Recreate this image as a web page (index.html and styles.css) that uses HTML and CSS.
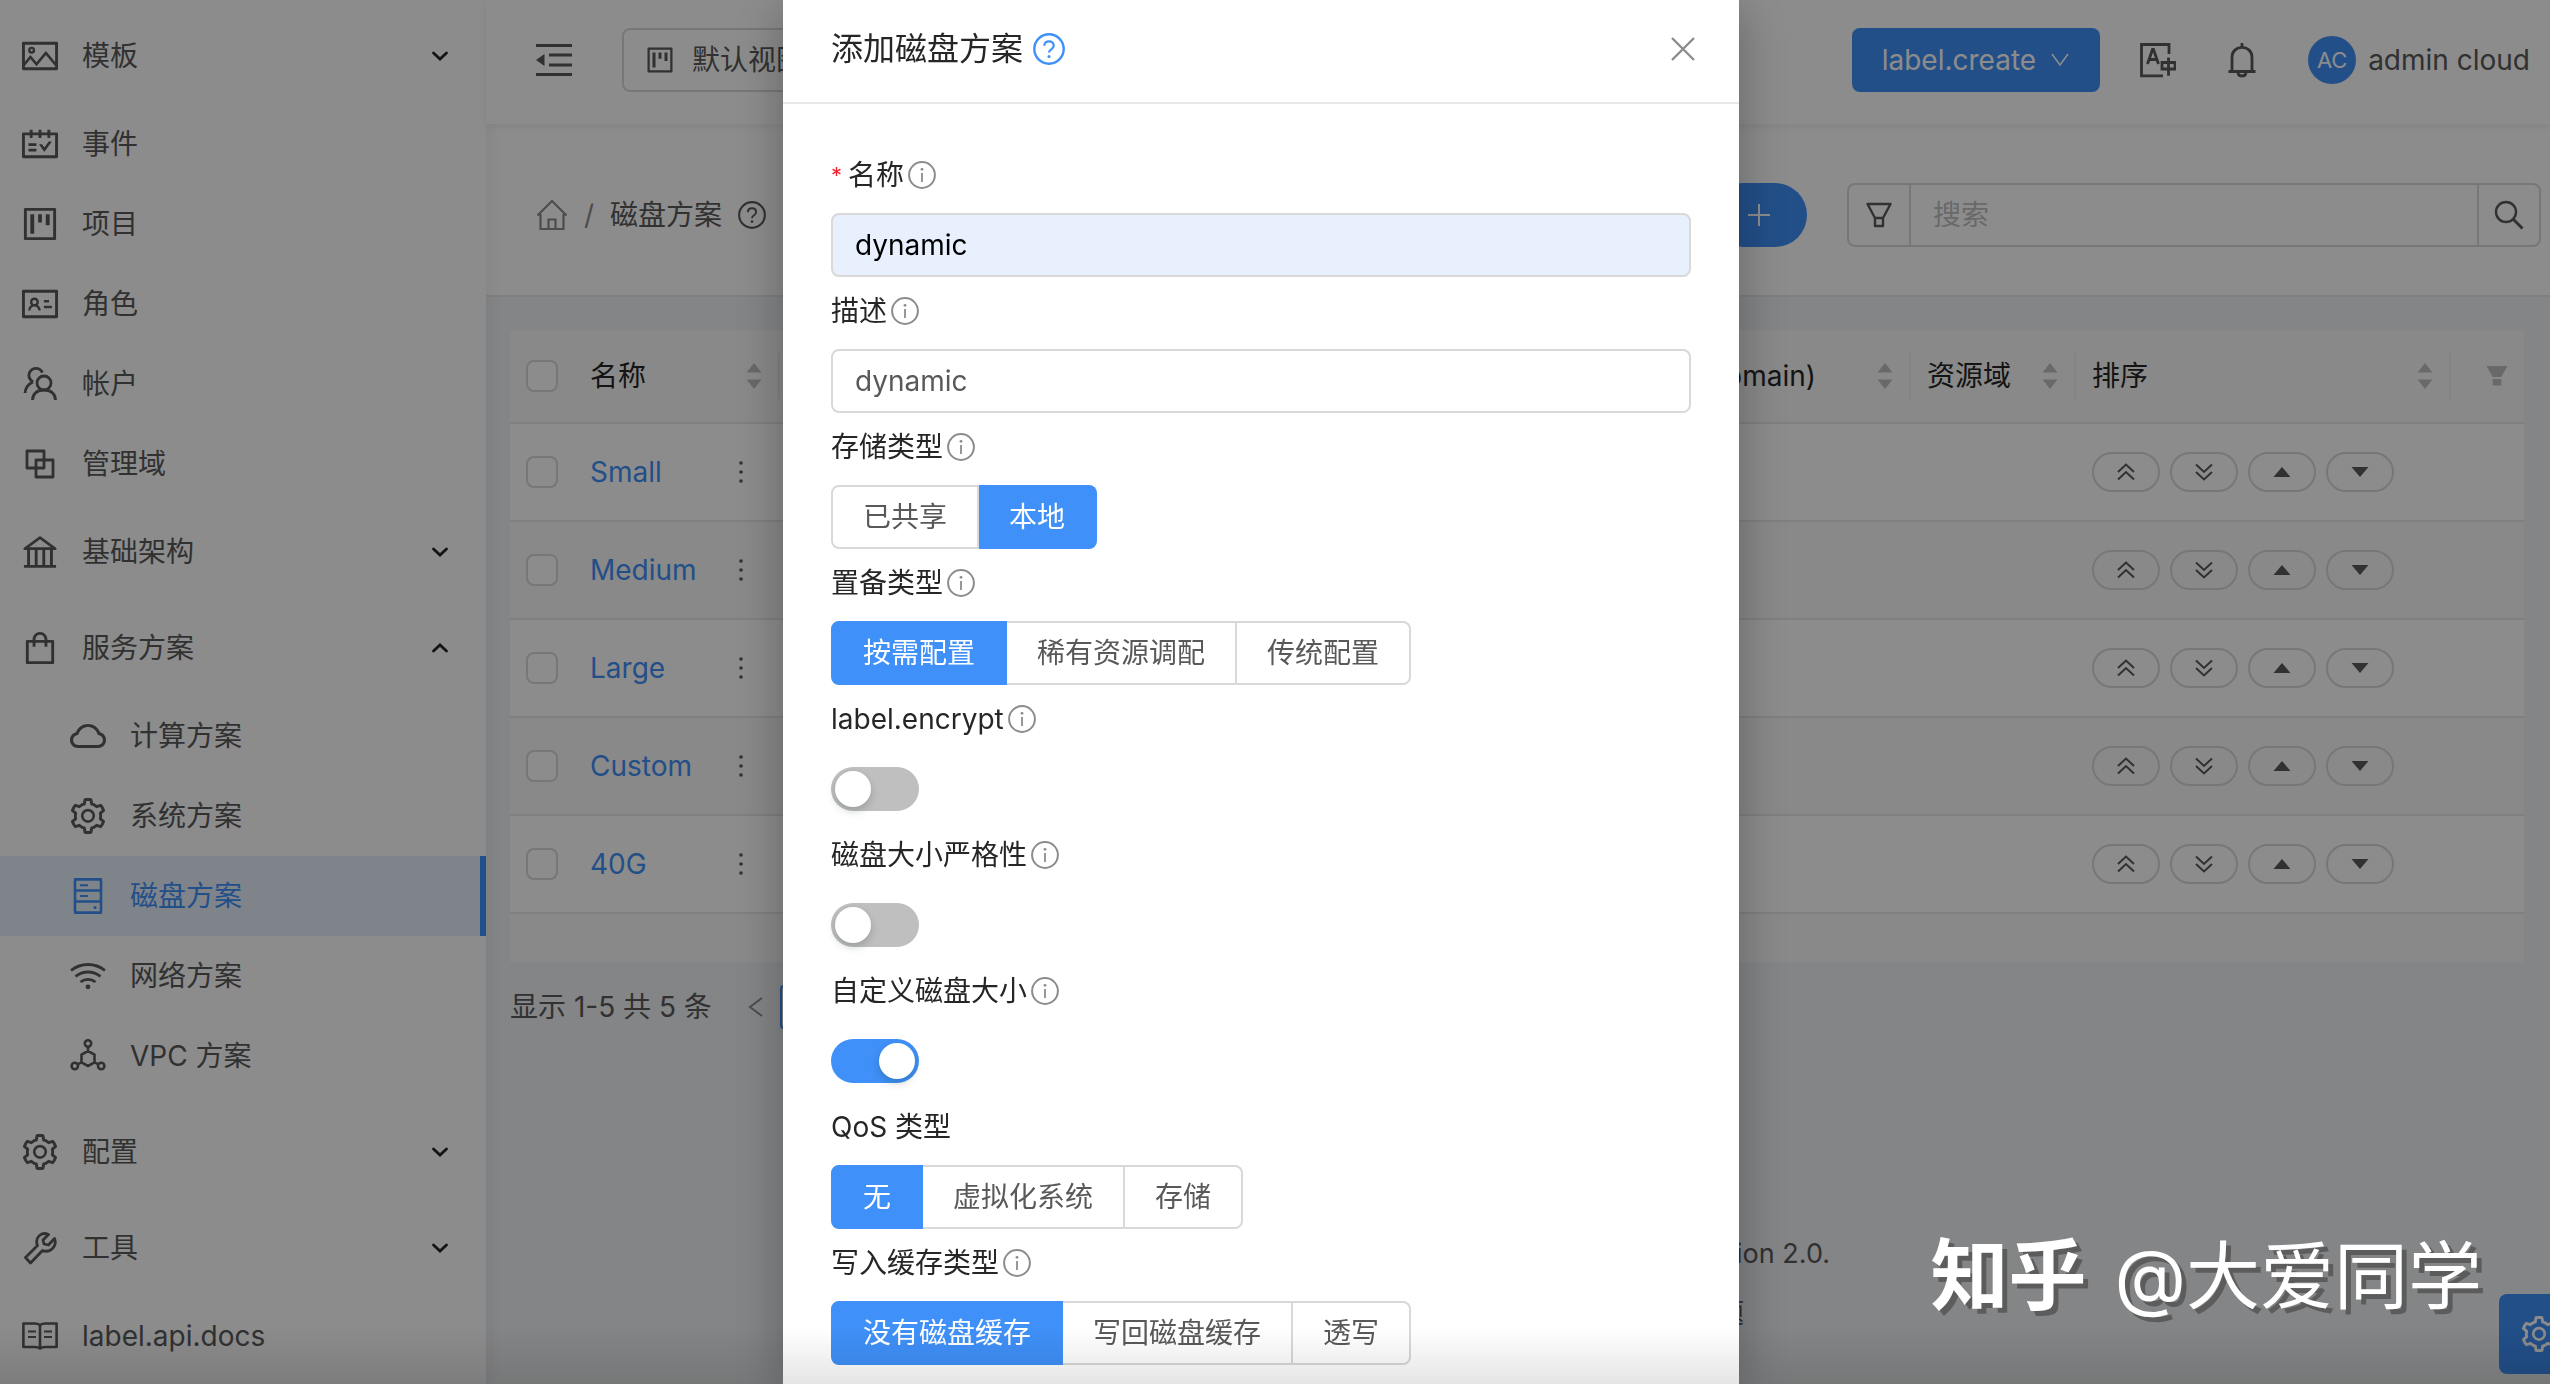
FILE: index.html
```html
<!DOCTYPE html>
<html lang="zh-CN">
<head>
  <meta charset="UTF-8" />
  <title>磁盘方案</title>
  <meta name="viewport" content="width=device-width, initial-scale=1.0" />
  <link rel="stylesheet" href="styles.css">
</head>
<body>

<!-- icon sprite -->
<svg class="sprite" aria-hidden="true">
  <symbol id="i-picture" viewBox="64 64 896 896"><path d="M928 160H96c-17.7 0-32 14.3-32 32v640c0 17.7 14.3 32 32 32h832c17.7 0 32-14.3 32-32V192c0-17.7-14.3-32-32-32zm-40 632H136v-39.9l138.500-164.300 150.100 178L658.100 489 888 761.600V792zm0-129.800L664.200 396.800c-3.200-3.800-9-3.800-12.200 0L424.600 666.400l-144-170.700c-3.200-3.800-9-3.800-12.200 0L136 652.700V232h752v430.200zM304 456a88 88 0 1 0 0-176 88 88 0 0 0 0 176zm0-116c15.500 0 28 12.500 28 28s-12.500 28-28 28-28-12.500-28-28 12.500-28 28-28z"/></symbol>
  <symbol id="i-schedule" viewBox="64 64 896 896"><path d="M928 224H768v-56c0-4.400-3.600-8-8-8h-56c-4.400 0-8 3.600-8 8v56H548v-56c0-4.400-3.600-8-8-8h-56c-4.400 0-8 3.600-8 8v56H328v-56c0-4.400-3.600-8-8-8h-56c-4.400 0-8 3.600-8 8v56H96c-17.700 0-32 14.300-32 32v576c0 17.700 14.300 32 32 32h832c17.700 0 32-14.300 32-32V256c0-17.700-14.300-32-32-32zm-40 568H136V296h120v56c0 4.400 3.600 8 8 8h56c4.400 0 8-3.600 8-8v-56h148v56c0 4.400 3.600 8 8 8h56c4.400 0 8-3.600 8-8v-56h148v56c0 4.400 3.600 8 8 8h56c4.400 0 8-3.600 8-8v-56h120v496zM416 496H232c-4.400 0-8 3.600-8 8v48c0 4.400 3.600 8 8 8h184c4.400 0 8-3.600 8-8v-48c0-4.400-3.600-8-8-8zm0 136H232c-4.400 0-8 3.600-8 8v48c0 4.400 3.600 8 8 8h184c4.400 0 8-3.600 8-8v-48c0-4.400-3.600-8-8-8zm308.200-177.400L620.600 598.300l-52.800-73.100c-3-4.200-7.800-6.600-12.900-6.600H500c-6.500 0-10.300 7.400-6.500 12.700l114.100 158.200a15.900 15.900 0 0 0 25.800 0l165-228.700c3.800-5.300 0-12.700-6.500-12.700H737c-5-.1-9.800 2.400-12.800 6.500z"/></symbol>
  <symbol id="i-project" viewBox="64 64 896 896"><path d="M280 752h80c4.400 0 8-3.600 8-8V280c0-4.400-3.600-8-8-8h-80c-4.400 0-8 3.600-8 8v464c0 4.400 3.600 8 8 8zm192-280h80c4.400 0 8-3.600 8-8V280c0-4.400-3.600-8-8-8h-80c-4.400 0-8 3.600-8 8v184c0 4.400 3.600 8 8 8zm192 72h80c4.400 0 8-3.600 8-8V280c0-4.400-3.600-8-8-8h-80c-4.400 0-8 3.600-8 8v256c0 4.400 3.600 8 8 8zm216-432H144c-17.700 0-32 14.300-32 32v736c0 17.700 14.300 32 32 32h736c17.700 0 32-14.300 32-32V144c0-17.700-14.300-32-32-32zm-40 728H184V184h656v656z"/></symbol>
  <symbol id="i-idcard" viewBox="64 64 896 896"><path d="M928 160H96c-17.700 0-32 14.300-32 32v640c0 17.700 14.300 32 32 32h832c17.700 0 32-14.300 32-32V192c0-17.700-14.300-32-32-32zm-40 632H136V232h752v560zM610.300 476h123.400c1.300 0 2.300-3.600 2.300-8v-48c0-4.400-1-8-2.300-8H610.300c-1.300 0-2.300 3.600-2.300 8v48c0 4.400 1 8 2.300 8zm4.800 144h185.700c3.900 0 7.100-3.600 7.100-8v-48c0-4.400-3.200-8-7.100-8H615.100c-3.900 0-7.100 3.600-7.100 8v48c0 4.400 3.200 8 7.100 8zM224 673h43.900c4.200 0 7.600-3.300 7.900-7.500 3.800-50.500 46-90.500 97.200-90.500s93.400 40 97.200 90.500c.3 4.200 3.700 7.500 7.900 7.500H522a8 8 0 0 0 8-8.400c-2.800-53.300-32-99.700-74.600-126.100a111.800 111.800 0 0 0 29.100-75.500c0-61.900-49.900-112-111.400-112s-111.400 50.100-111.400 112c0 29.100 11 55.500 29.100 75.500a158.090 158.090 0 0 0-74.600 126.100c-.4 4.600 3.200 8.400 7.800 8.400zm149-262c28.500 0 51.700 23.300 51.700 52s-23.200 52-51.700 52-51.700-23.300-51.700-52 23.200-52 51.700-52z"/></symbol>
  <symbol id="i-team" viewBox="0 0 36 36"><g fill="none" stroke="currentColor" stroke-width="2.800"><circle cx="22" cy="17" r="7"/><path d="M10.500 34c0-6.500 5-10 11.500-10s11.500 3.500 11.500 10M20.500 6.500c-3-5.500-10-5.500-13 0-1.500 3.500 0 7 3.500 9.500M3 27c.5-6 3.500-9 8-11"/></g></symbol>
  <symbol id="i-block" viewBox="0 0 36 36"><g fill="none" stroke="currentColor" stroke-width="2.800" stroke-linejoin="round"><path d="M5 5h17v17H5zM14 14h17v17H14z"/></g></symbol>
  <symbol id="i-bank" viewBox="64 64 896 896"><path d="M894 462c30.900 0 43.800-39.700 18.700-58L530.800 126.200a31.810 31.810 0 0 0-37.600 0L111.300 404c-25.100 18.200-12.200 58 18.800 58H192v374h-72c-4.400 0-8 3.600-8 8v52c0 4.400 3.600 8 8 8h784c4.400 0 8-3.600 8-8v-52c0-4.400-3.600-8-8-8h-72V462h62zM512 196.700l271.100 197.200H240.900L512 196.700zM264 462h117v374H264V462zm189 0h117v374H453V462zm307 374H642V462h118v374z"/></symbol>
  <symbol id="i-shopping" viewBox="64 64 896 896"><path d="M832 312H696v-16c0-101.600-82.400-184-184-184s-184 82.400-184 184v16H192c-17.700 0-32 14.300-32 32v536c0 17.700 14.300 32 32 32h640c17.700 0 32-14.300 32-32V344c0-17.700-14.300-32-32-32zm-432-16c0-61.900 50.100-112 112-112s112 50.100 112 112v16H400v-16zm392 544H232V384h96v88c0 4.400 3.600 8 8 8h56c4.400 0 8-3.600 8-8v-88h224v88c0 4.400 3.600 8 8 8h56c4.400 0 8-3.600 8-8v-88h96v456z"/></symbol>
  <symbol id="i-cloud" viewBox="64 64 896 896"><path d="M811.400 418.700C765.600 297.900 648.900 212 512.200 212S258.800 297.800 213 418.600C127.300 441.100 64 519.100 64 612c0 110.500 89.500 200 199.900 200h496.200C870.500 812 960 722.500 960 612c0-92.700-63.100-170.700-148.600-193.300zm36.300 281a123.070 123.070 0 0 1-87.600 36.300H263.900c-33.100 0-64.200-12.900-87.600-36.300A123.300 123.300 0 0 1 140 612c0-28 9.100-54.300 26.200-76.300a125.700 125.700 0 0 1 66.100-43.700l37.900-9.900 13.900-36.600c8.600-22.800 20.600-44.100 35.700-63.400a245.600 245.600 0 0 1 52.400-49.900c41.100-28.900 89.500-44.200 140-44.200s98.900 15.300 140 44.200c19.900 14 37.500 30.800 52.400 49.900 15.100 19.300 27.100 40.700 35.700 63.400l13.800 36.500 37.800 10c54.300 14.500 92.100 63.800 92.100 120 0 33.100-12.900 64.300-36.300 87.700z"/></symbol>
  <symbol id="i-setting" viewBox="64 64 896 896"><path d="M924.800 625.700l-65.500-56c3.100-19 4.700-38.400 4.700-57.800s-1.600-38.800-4.700-57.800l65.500-56a32.030 32.030 0 0 0 9.300-35.200l-.9-2.600a443.740 443.740 0 0 0-79.700-137.900l-1.800-2.100a32.120 32.120 0 0 0-35.100-9.500l-81.300 28.900c-30-24.600-63.500-44-99.700-57.600l-15.700-85a32.050 32.050 0 0 0-25.800-25.700l-2.700-.5c-52.100-9.400-106.900-9.400-159 0l-2.700.5a32.050 32.050 0 0 0-25.800 25.700l-15.800 85.400a351.860 351.860 0 0 0-99 57.400l-81.900-29.100a32 32 0 0 0-35.100 9.500l-1.800 2.100a446.020 446.020 0 0 0-79.700 137.900l-.9 2.600c-4.500 12.500-.8 26.500 9.300 35.200l66.300 56.600c-3.100 18.800-4.600 38-4.600 57.100 0 19.200 1.500 38.400 4.600 57.100L99 625.500a32.030 32.030 0 0 0-9.300 35.200l.9 2.600c18.100 50.400 44.900 96.900 79.700 137.900l1.800 2.100a32.120 32.120 0 0 0 35.100 9.500l81.900-29.100c29.800 24.500 63.100 43.900 99 57.400l15.800 85.400a32.050 32.050 0 0 0 25.800 25.700l2.700.5a449.400 449.400 0 0 0 159 0l2.700-.5a32.050 32.050 0 0 0 25.800-25.700l15.700-85a350 350 0 0 0 99.700-57.600l81.300 28.900a32 32 0 0 0 35.100-9.500l1.800-2.100c34.800-41.100 61.600-87.500 79.700-137.900l.9-2.600c4.500-12.300.8-26.300-9.300-35zM788.300 465.900c2.500 15.100 3.800 30.600 3.800 46.100s-1.300 31-3.800 46.100l-6.600 40.100 74.700 63.900a370.030 370.030 0 0 1-42.600 73.600L721 702.800l-31.400 25.800c-23.900 19.600-50.500 35-79.300 45.800l-38.100 14.300-17.900 97a377.500 377.500 0 0 1-85 0l-17.900-97.200-37.800-14.500c-28.500-10.800-55-26.200-78.700-45.700l-31.400-25.900-93.400 33.200c-17-22.900-31.200-47.600-42.600-73.600l75.500-64.500-6.500-40c-2.400-14.900-3.700-30.300-3.700-45.500 0-15.300 1.200-30.600 3.700-45.500l6.500-40-75.500-64.500c11.300-26.100 25.600-50.700 42.600-73.600l93.400 33.200 31.400-25.900c23.700-19.500 50.200-34.900 78.700-45.700l37.900-14.300 17.900-97.200c28.100-3.200 56.800-3.200 85 0l17.900 97 38.100 14.300c28.700 10.800 55.400 26.200 79.300 45.800l31.400 25.800 92.800-32.900c17 22.900 31.200 47.600 42.600 73.600L781.800 426l6.500 39.900z"/><circle cx="512" cy="508" r="144" fill="none" stroke="currentColor" stroke-width="66"/></symbol>
  <symbol id="i-hdd" viewBox="0 0 36 36"><path d="M5 1.400h26v33.200H5zM5 12.500h26M5 23.500h26" fill="none" stroke="currentColor" stroke-width="2.600" stroke-linejoin="round"/><path d="M10 7.200h8M10 18h8" stroke="currentColor" stroke-width="2"/><circle cx="25" cy="29.500" r="1.600"/></symbol>
  <symbol id="i-wifi" viewBox="0 0 36 36"><g fill="none" stroke="currentColor" stroke-width="2.800"><path d="M1 12.500c10-8 24-8 34 0M5.500 18.500c7.500-6 17.500-6 25 0M10.500 24c4.500-3.500 10.500-3.500 15 0"/></g><circle cx="18" cy="28.800" r="2.400"/></symbol>
  <symbol id="i-deploy" viewBox="0 0 36 36"><g fill="none" stroke="currentColor" stroke-width="2.600" stroke-linejoin="round"><circle cx="18" cy="5.500" r="3.200"/><circle cx="4.800" cy="28" r="3.200"/><circle cx="31.200" cy="28" r="3.200"/><path d="M18 13l6.500 3.600v7.800L18 28l-6.500-3.600v-7.800zM18 8.700V13M11.500 24.400l-4 2M24.500 24.400l4 2"/></g></symbol>
  <symbol id="i-tool" viewBox="0 0 36 36"><path d="M26.500 4.500C19 1 12.500 8 15.500 15.500L3.500 27.500l5 5.500 12-12.500c8 3 15-4.500 12-12l-6 6.500-4.500-1-1-4z" fill="none" stroke="currentColor" stroke-width="2.800" stroke-linejoin="round"/></symbol>
  <symbol id="i-read" viewBox="0 0 36 36"><path d="M1.400 5.500h11.200c2 0 4 .5 5.400 1.800 1.400-1.300 3.400-1.800 5.400-1.800h11.200V29H23.400c-2 0-4 .5-5.400 1.600-1.400-1.100-3.400-1.600-5.400-1.600H1.400zM18 7.500v22.500" fill="none" stroke="currentColor" stroke-width="2.600" stroke-linejoin="round"/><path d="M6 13.500h8M6 19h8M22 13.500h8M22 19h8" stroke="currentColor" stroke-width="2.200"/></symbol>
  <symbol id="i-down" viewBox="0 0 20 20"><path d="M3.500 7l6.500 6 6.500-6" fill="none" stroke="currentColor" stroke-width="2.800" stroke-linecap="round"/></symbol>
  <symbol id="i-up" viewBox="0 0 20 20"><path d="M3.500 13l6.500-6 6.500 6" fill="none" stroke="currentColor" stroke-width="2.800" stroke-linecap="round"/></symbol>
  <symbol id="i-thin-down" viewBox="0 0 20 20"><path d="M2 4l8 11 8-11" fill="none" stroke="currentColor" stroke-width="1.600"/></symbol>
  <symbol id="i-fold" viewBox="0 0 36 36"><path d="M0 3.500h36M13 13h23M13 23h23M0 32.500h36" stroke="currentColor" stroke-width="3"/><path d="M8.500 12v12L0 18z"/></symbol>
  <symbol id="i-home" viewBox="0 0 32 32"><path d="M1.500 16.500L16 2l14.500 14.500M4.500 15v15h23V15M12.500 30V20.500h7V30" fill="none" stroke="currentColor" stroke-width="2.200"/></symbol>
  <symbol id="i-question" viewBox="0 0 32 32"><circle cx="16" cy="16" r="14.700" fill="none" stroke="currentColor" stroke-width="2.400"/><path d="M11.300 12.800c0-6 9.400-6 9.400 0 0 3.800-4.700 3.200-4.700 6.800" fill="none" stroke="currentColor" stroke-width="2.200"/><circle cx="16" cy="23.500" r="1.500"/></symbol>
  <symbol id="i-info" viewBox="0 0 28 28"><circle cx="14" cy="14" r="12.900" fill="none" stroke="currentColor" stroke-width="2"/><path d="M14 12v9" stroke="currentColor" stroke-width="1.800"/><circle cx="14" cy="8.300" r="1.400"/></symbol>
  <symbol id="i-close" viewBox="0 0 24 24"><path d="M1 1l22 22M23 1L1 23" stroke="currentColor" stroke-width="2.400"/></symbol>
  <symbol id="i-translate" viewBox="0 0 36 36"><g fill="none" stroke="currentColor" stroke-width="2.800"><path d="M29 12V2.500H1.500v31.300H23"/><path d="M7.500 22l5-14.500h1l5 14.500M9.500 17.500h7"/><path d="M28.500 15.500v18.300M22 20.500h13v6.500H22z"/></g></symbol>
  <symbol id="i-bell" viewBox="0 0 36 36"><path d="M18 1v3.500M8 28.500V15.500C8 2 28 2 28 15.500v13M4.500 29.500h27M14 31c.5 4 7.500 4 8 0" fill="none" stroke="currentColor" stroke-width="2.800"/></symbol>
  <symbol id="i-plus" viewBox="0 0 24 24"><path d="M12 1v22M1 12h22" stroke="currentColor" stroke-width="2"/></symbol>
  <symbol id="i-filter" viewBox="0 0 26 26"><path d="M1.500 2h23l-7.500 14v8H9v-8zM9 16h8" fill="none" stroke="currentColor" stroke-width="2.400" stroke-linejoin="round"/></symbol>
  <symbol id="i-filter-fill" viewBox="0 0 22 22"><path d="M.5 1h21l-6.200 11H6.700zM6.700 14h8.600v6.500H6.700z"/></symbol>
  <symbol id="i-search" viewBox="0 0 30 30"><circle cx="12" cy="12" r="10" fill="none" stroke="currentColor" stroke-width="2.400"/><path d="M19 19l9.500 9.500" stroke="currentColor" stroke-width="3"/></symbol>
  <symbol id="i-sorter" viewBox="0 0 16 28"><path d="M8 1l7.500 9.500H.5zM8 27l7.500-9.500H.5z"/></symbol>
  <symbol id="i-more" viewBox="0 0 8 24"><circle cx="4" cy="3" r="1.800"/><circle cx="4" cy="12" r="1.800"/><circle cx="4" cy="21" r="1.800"/></symbol>
  <symbol id="i-double-up" viewBox="0 0 20 20"><path d="M2 10l8-7.500 8 7.500M2 17.500L10 10l8 7.500" fill="none" stroke="currentColor" stroke-width="2"/></symbol>
  <symbol id="i-double-down" viewBox="0 0 20 20"><path d="M2 2.500l8 7.500 8-7.500M2 10l8 7.500 8-7.500" fill="none" stroke="currentColor" stroke-width="2"/></symbol>
  <symbol id="i-caret-up" viewBox="0 0 20 20"><path d="M10 5l8.500 10h-17z"/></symbol>
  <symbol id="i-caret-down" viewBox="0 0 20 20"><path d="M10 15L1.500 5h17z"/></symbol>
  <symbol id="i-left" viewBox="0 0 16 20"><path d="M14 1L2 10l12 9" fill="none" stroke="currentColor" stroke-width="2"/></symbol>
</svg>

<div class="layout">
  <nav class="sider">
    <a class="menu-item menu-title" href="#"><svg class="icon"><use href="#i-picture"/></svg>模板<svg class="arrow"><use href="#i-down"/></svg></a>
    <a class="menu-item" href="#"><svg class="icon"><use href="#i-schedule"/></svg>事件</a>
    <a class="menu-item" href="#"><svg class="icon"><use href="#i-project"/></svg>项目</a>
    <a class="menu-item" href="#"><svg class="icon"><use href="#i-idcard"/></svg>角色</a>
    <a class="menu-item" href="#"><svg class="icon"><use href="#i-team"/></svg>帐户</a>
    <a class="menu-item" href="#"><svg class="icon"><use href="#i-block"/></svg>管理域</a>
    <a class="menu-item menu-title" href="#"><svg class="icon"><use href="#i-bank"/></svg>基础架构<svg class="arrow"><use href="#i-down"/></svg></a>
    <a class="menu-item menu-title" href="#"><svg class="icon"><use href="#i-shopping"/></svg>服务方案<svg class="arrow"><use href="#i-up"/></svg></a>
    <div class="submenu">
      <a class="menu-item" href="#"><svg class="icon"><use href="#i-cloud"/></svg>计算方案</a>
      <a class="menu-item" href="#"><svg class="icon"><use href="#i-setting"/></svg>系统方案</a>
      <a class="menu-item active" href="#"><svg class="icon"><use href="#i-hdd"/></svg>磁盘方案</a>
      <a class="menu-item" href="#"><svg class="icon"><use href="#i-wifi"/></svg>网络方案</a>
      <a class="menu-item" href="#"><svg class="icon"><use href="#i-deploy"/></svg>VPC 方案</a>
    </div>
    <a class="menu-item menu-title" href="#"><svg class="icon"><use href="#i-setting"/></svg>配置<svg class="arrow"><use href="#i-down"/></svg></a>
    <a class="menu-item menu-title" href="#"><svg class="icon"><use href="#i-tool"/></svg>工具<svg class="arrow"><use href="#i-down"/></svg></a>
    <a class="menu-item" href="#"><svg class="icon"><use href="#i-read"/></svg>label.api.docs</a>
  </nav>

  <div class="main">
    <header class="header">
      <button class="icon-btn" aria-label="fold menu"><svg class="icon"><use href="#i-fold"/></svg></button>
      <button class="view-select"><svg class="icon-sm"><use href="#i-project"/></svg>默认视图</button>
      <div class="header-right">
        <button class="create-btn">label.create<svg class="create-arrow"><use href="#i-thin-down"/></svg></button>
        <button class="icon-btn" aria-label="language"><svg class="icon"><use href="#i-translate"/></svg></button>
        <button class="icon-btn" aria-label="notifications"><svg class="icon"><use href="#i-bell"/></svg></button>
        <a class="user" href="#"><span class="avatar">AC</span>admin cloud</a>
      </div>
    </header>

    <div class="toolbar">
      <div class="breadcrumb">
        <a href="#" aria-label="home"><svg class="home"><use href="#i-home"/></svg></a>
        <span class="slash">/</span>
        <span>磁盘方案</span>
        <svg class="help"><use href="#i-question"/></svg>
      </div>
      <button class="add-btn" aria-label="add"><svg><use href="#i-plus"/></svg></button>
      <div class="search">
        <button class="search-side" aria-label="filter"><svg class="icon-filter"><use href="#i-filter"/></svg></button>
        <input class="search-input" type="text" placeholder="搜索" aria-label="搜索">
        <button class="search-side search-go" aria-label="search"><svg class="icon-search"><use href="#i-search"/></svg></button>
      </div>
    </div>

    <div class="content">
      <table class="table">
        <colgroup>
          <col class="col-check"><col class="col-name"><col><col class="col-domain"><col class="col-zone"><col class="col-order"><col class="col-filter">
        </colgroup>
        <thead>
          <tr>
            <th><input class="check" type="checkbox" aria-label="全选"></th>
            <th><div class="th">名称<svg class="sorter"><use href="#i-sorter"/></svg></div></th>
            <th></th>
            <th><div class="th">域(domain)<svg class="sorter"><use href="#i-sorter"/></svg></div></th>
            <th><div class="th">资源域<svg class="sorter"><use href="#i-sorter"/></svg></div></th>
            <th><div class="th">排序<svg class="sorter"><use href="#i-sorter"/></svg></div></th>
            <th><svg class="filter-fill"><use href="#i-filter-fill"/></svg></th>
          </tr>
        </thead>
        <tbody id="rows"></tbody>
      </table>
      <div class="table-foot"></div>
      <div class="pagination">
        <span>显示 1-5 共 5 条</span>
        <button class="page-prev" aria-label="previous"><svg><use href="#i-left"/></svg></button>
        <button class="page-num">1</button>
      </div>
    </div>

    <footer class="footer">
      <div>Licensed under the Apache License, Version 2.0.</div>
      <a class="report" href="#">报告问题</a>
    </footer>
  </div>
</div>

<button class="setting-btn" aria-label="settings"><svg class="icon"><use href="#i-setting"/></svg></button>

<div class="mask">
  <div class="modal" role="dialog" aria-labelledby="modal-title">
    <div class="modal-header">
      <h1 id="modal-title">添加磁盘方案</h1>
      <svg class="title-help"><use href="#i-question"/></svg>
      <button class="close" aria-label="close"><svg><use href="#i-close"/></svg></button>
    </div>
    <form class="form">
      <label class="label required" for="name">名称<svg><use href="#i-info"/></svg></label>
      <input class="input autofill" id="name" type="text" value="dynamic">

      <label class="label" for="desc">描述<svg><use href="#i-info"/></svg></label>
      <input class="input" id="desc" type="text" value="dynamic">

      <div class="label" id="l-storage">存储类型<svg><use href="#i-info"/></svg></div>
      <div class="radios" role="radiogroup" aria-labelledby="l-storage">
        <label><input type="radio" name="storage">已共享</label>
        <label><input type="radio" name="storage" checked>本地</label>
      </div>

      <div class="label" id="l-prov">置备类型<svg><use href="#i-info"/></svg></div>
      <div class="radios" role="radiogroup" aria-labelledby="l-prov">
        <label><input type="radio" name="prov" checked>按需配置</label>
        <label><input type="radio" name="prov">稀有资源调配</label>
        <label><input type="radio" name="prov">传统配置</label>
      </div>

      <label class="label" for="encrypt">label.encrypt<svg><use href="#i-info"/></svg></label>
      <div class="control"><input class="switch" id="encrypt" type="checkbox"></div>

      <label class="label" for="strict">磁盘大小严格性<svg><use href="#i-info"/></svg></label>
      <div class="control"><input class="switch" id="strict" type="checkbox"></div>

      <label class="label" for="custom">自定义磁盘大小<svg><use href="#i-info"/></svg></label>
      <div class="control"><input class="switch" id="custom" type="checkbox" checked></div>

      <div class="label" id="l-qos">QoS 类型</div>
      <div class="radios" role="radiogroup" aria-labelledby="l-qos">
        <label><input type="radio" name="qos" checked>无</label>
        <label><input type="radio" name="qos">虚拟化系统</label>
        <label><input type="radio" name="qos">存储</label>
      </div>

      <div class="label" id="l-cache">写入缓存类型<svg><use href="#i-info"/></svg></div>
      <div class="radios" role="radiogroup" aria-labelledby="l-cache">
        <label><input type="radio" name="cache" checked>没有磁盘缓存</label>
        <label><input type="radio" name="cache">写回磁盘缓存</label>
        <label><input type="radio" name="cache">透写</label>
      </div>
    </form>
  </div>
</div>

<div class="bottom-shade"></div>
<div class="watermark"><b>知乎</b><span>@大爱同学</span></div>

<script>
  const offerings = ["Small", "Medium", "Large", "Custom", "40G"];
  const moves = ["double-up", "double-down", "caret-up", "caret-down"];

  document.getElementById("rows").innerHTML = offerings.map(name => `
    <tr>
      <td><input class="check" type="checkbox" aria-label="${name}"></td>
      <td><div class="name-cell"><a href="#">${name}</a><button class="more" aria-label="more"><svg><use href="#i-more"/></svg></button></div></td>
      <td></td><td></td><td></td>
      <td><div class="moves">${moves.map(m => `<button aria-label="${m}"><svg><use href="#i-${m}"/></svg></button>`).join("")}</div></td>
      <td></td>
    </tr>`).join("");
</script>

</body>
</html>
```
FILE: styles.css
```css
* { margin: 0; padding: 0; box-sizing: border-box; }

body {
  font-family: Inter, "Noto Sans CJK SC", sans-serif;
  font-size: 28px;
  line-height: 44px;
  color: #595959;
  background: #f0f2f5;
  height: 100vh;
  overflow: hidden;
}

button, input {
  font: inherit;
  color: inherit;
  border: none;
  background: none;
}

button { cursor: pointer; }
a { color: inherit; text-decoration: none; }
svg { fill: currentColor; flex: none; display: block; }

.sprite { display: none; }
.icon { width: 36px; height: 36px; }
.icon-sm { width: 28px; height: 28px; }

.layout {
  display: flex;
  height: 100vh;
  overflow: hidden;
}

/* sidebar */
.sider {
  display: flex;
  flex-direction: column;
  flex: none;
  width: 486px;
  padding-top: 8px;
  background: #fff;
  box-shadow: 4px 0 12px rgba(29, 35, 41, 0.06);
  z-index: 1;
}

.sider > * { flex: none; }

.menu-item {
  display: flex;
  align-items: center;
  gap: 24px;
  height: 80px;
  padding: 0 36px 0 22px;
}

.menu-title {
  margin: 8px 0;
}

.arrow {
  width: 20px;
  height: 20px;
  margin-left: auto;
  color: #262626;
}

.submenu { padding-bottom: 8px; }
.submenu .menu-item { padding-left: 70px; }

.submenu .active {
  background: #e8f1fe;
  color: #3f90f8;
  border-right: 6px solid #3f90f8;
}

/* top bar */
.main {
  flex: 1;
  min-width: 0;
  display: flex;
  flex-direction: column;
}

.header {
  display: flex;
  align-items: center;
  height: 124px;
  padding: 0 20px 4px 50px;
  background: #fff;
  box-shadow: 0 2px 8px rgba(0, 21, 41, 0.08);
  z-index: 1;
}

.view-select {
  display: flex;
  align-items: center;
  gap: 18px;
  width: 400px;
  height: 64px;
  margin-left: 50px;
  padding: 0 22px;
  border: 2px solid #d9d9d9;
  border-radius: 8px;
}

.header-right {
  display: flex;
  align-items: center;
  gap: 48px;
  margin-left: auto;
}

.create-btn {
  display: flex;
  align-items: center;
  gap: 14px;
  height: 64px;
  padding: 0 30px;
  margin-right: -8px;
  border-radius: 8px;
  background: #3f90f8;
  color: #fff;
}

.create-arrow { width: 20px; height: 20px; }

.user {
  display: flex;
  align-items: center;
  gap: 12px;
}

.avatar {
  width: 48px;
  height: 48px;
  line-height: 48px;
  border-radius: 50%;
  background: #3f90f8;
  color: #fff;
  font-size: 22px;
  text-align: center;
}

.toolbar {
  display: flex;
  align-items: center;
  height: 173px;
  padding: 10px 9px 0 50px;
  background: #fff;
  border-bottom: 2px solid #e8e8e8;
}

.breadcrumb {
  display: flex;
  align-items: center;
  gap: 16px;
}

.home { width: 32px; height: 32px; color: #8c8c8c; }
.slash { color: #8c8c8c; }
.help { width: 28px; height: 28px; }

.add-btn {
  display: flex;
  align-items: center;
  justify-content: center;
  width: 96px;
  height: 64px;
  margin-left: auto;
  border-radius: 32px;
  background: #3f90f8;
  color: #fff;
}

.add-btn svg { width: 24px; height: 24px; }

.search {
  display: flex;
  width: 694px;
  height: 64px;
  margin-left: 40px;
  border: 2px solid #d9d9d9;
  border-radius: 8px;
}

.search-side {
  display: flex;
  align-items: center;
  justify-content: center;
  width: 62px;
  border-right: 2px solid #d9d9d9;
}

.search-go {
  border-right: none;
  border-left: 2px solid #d9d9d9;
}

.icon-filter { width: 26px; height: 26px; }
.icon-search { width: 30px; height: 30px; }

.search-input {
  flex: 1;
  min-width: 0;
  padding: 0 22px;
}

.search-input::placeholder { color: #bfbfbf; }

/* table */
.content { padding: 33px 26px 0 24px; }

.table {
  width: 100%;
  table-layout: fixed;
  border-collapse: separate;
  border-spacing: 0;
  background: #fff;
}

.col-check { width: 64px; }
.col-name { width: 206px; }
.col-domain { width: 257px; }
.col-zone { width: 165px; }
.col-order { width: 375px; }
.col-filter { width: 73px; }

th, td {
  padding: 0 16px;
  text-align: left;
  border-bottom: 2px solid #e8e8e8;
}

th {
  height: 94px;
  background: #fafafa;
  color: #262626;
  font-weight: 400;
}

td { height: 98px; }
tbody tr:nth-child(even) td { background: #f9f9f9; }

.th {
  display: flex;
  align-items: center;
  justify-content: space-between;
  height: 46px;
  margin-right: -16px;
  padding-right: 16px;
  border-right: 2px solid #efefef;
}

.sorter { width: 16px; height: 28px; color: #bfbfbf; }
.filter-fill { width: 22px; height: 22px; margin-left: auto; color: #bfbfbf; }

.check {
  display: block;
  appearance: none;
  width: 32px;
  height: 32px;
  border: 2px solid #d9d9d9;
  border-radius: 8px;
  background: #fff;
}

.name-cell {
  display: flex;
  align-items: center;
  justify-content: space-between;
}

.name-cell a { color: #3f90f8; }

.more {
  display: flex;
  align-items: center;
  justify-content: center;
  width: 46px;
  height: 46px;
}

.more svg { width: 8px; height: 24px; }

.moves { display: flex; gap: 10px; }

.moves button {
  display: flex;
  align-items: center;
  justify-content: center;
  width: 68px;
  height: 40px;
  border: 2px solid #d9d9d9;
  border-radius: 20px;
}

.moves svg { width: 20px; height: 20px; }

.table-foot {
  height: 48px;
  background: #fafafa;
}

.pagination {
  display: flex;
  align-items: center;
  height: 90px;
}

.page-prev { margin: 0 16px 0 36px; }
.page-prev svg { width: 16px; height: 20px; color: #8c8c8c; }

.page-num {
  width: 48px;
  height: 44px;
  border: 2px solid #3f90f8;
  border-radius: 4px;
  color: #3f90f8;
}

.footer {
  display: flex;
  flex-direction: column;
  align-items: center;
  gap: 16px;
  margin-top: auto;
  padding-bottom: 48px;
  font-size: 27px;
}

.report { padding-left: 344px; }

.setting-btn {
  position: fixed;
  right: -29px;
  bottom: 10px;
  display: flex;
  align-items: center;
  justify-content: center;
  width: 80px;
  height: 80px;
  border-radius: 8px;
  background: #3f90f8;
  color: #fff;
}

/* modal */
.mask {
  position: fixed;
  inset: 0;
  z-index: 10;
  display: flex;
  justify-content: center;
  padding-right: 28px;
  background: rgba(0, 0, 0, 0.45);
}

.modal {
  width: 956px;
  background: #fff;
  box-shadow: 0 8px 48px rgba(0, 0, 0, 0.3);
}

.modal-header {
  display: flex;
  align-items: center;
  gap: 10px;
  height: 104px;
  padding: 0 44px 4px 48px;
  border-bottom: 2px solid #e8e8e8;
}

.modal-header h1 {
  font-size: 32px;
  font-weight: 400;
  color: #262626;
}

.title-help { width: 32px; height: 32px; color: #3f90f8; }

.close { margin-left: auto; color: #8c8c8c; }
.close svg { width: 24px; height: 24px; }

.form { padding: 37px 48px; }

.label {
  display: flex;
  align-items: center;
  gap: 4px;
  height: 72px;
  padding-bottom: 4px;
  color: #262626;
}

.label svg { width: 28px; height: 28px; color: #8c8c8c; }

.required::before {
  content: "*";
  margin-right: 2px;
  color: #f5222d;
  font-size: 22px;
}

.input {
  display: block;
  width: 100%;
  height: 64px;
  padding: 0 22px;
  border: 2px solid #d9d9d9;
  border-radius: 8px;
}

.autofill {
  background: #e8f0fe;
  color: #000;
}

.radios { display: flex; height: 64px; }

.radios label {
  padding: 0 30px;
  line-height: 60px;
  border: 2px solid #d9d9d9;
  border-left: none;
}

.radios label:first-child {
  border-left: 2px solid #d9d9d9;
  border-radius: 8px 0 0 8px;
}

.radios label:last-child { border-radius: 0 8px 8px 0; }

.radios label:has(:checked) {
  background: #3f90f8;
  border-color: #3f90f8;
  color: #fff;
}

.radios input {
  position: absolute;
  opacity: 0;
}

.control {
  display: flex;
  align-items: center;
  height: 64px;
}

.switch {
  appearance: none;
  width: 88px;
  height: 44px;
  padding: 4px;
  border-radius: 22px;
  background: #bfbfbf;
}

.switch::before {
  content: "";
  display: block;
  width: 36px;
  height: 36px;
  border-radius: 50%;
  background: #fff;
  box-shadow: 0 4px 8px rgba(0, 35, 11, 0.2);
}

.switch:checked { background: #3f90f8; }
.switch:checked::before { margin-left: auto; }

.bottom-shade {
  position: fixed;
  inset: auto 0 0;
  z-index: 11;
  height: 56px;
  background: linear-gradient(transparent, rgba(0, 0, 0, 0.1));
}

.watermark {
  position: fixed;
  right: 68px;
  bottom: 60px;
  z-index: 12;
  display: flex;
  align-items: center;
  gap: 28px;
  height: 96px;
  color: #fff;
  font-size: 74px;
  text-shadow: 5px 5px 0 rgba(0, 0, 0, 0.3);
}

.watermark b { font-size: 78px; }
```
